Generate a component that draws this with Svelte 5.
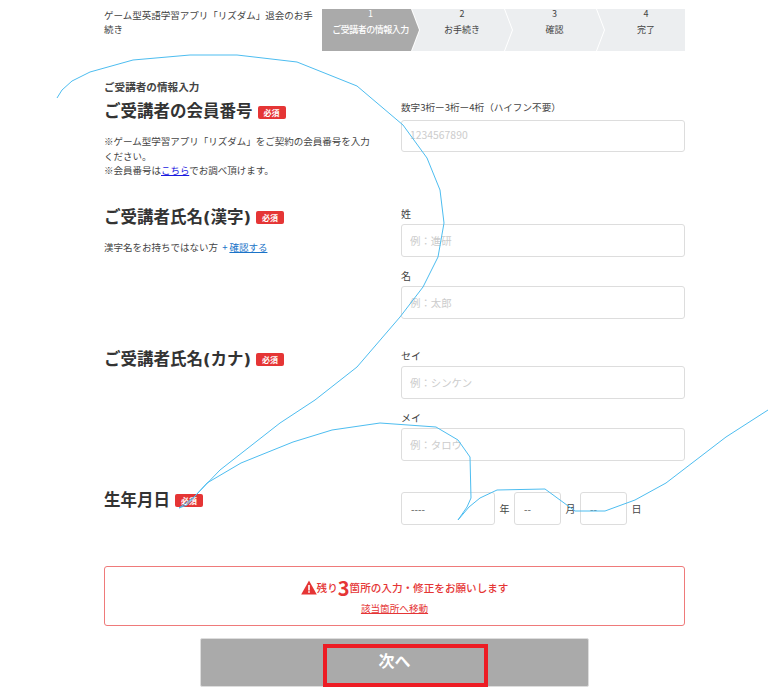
<script lang="ts">
  const steps = ['ご受講者の情報入力', 'お手続き', '確認', '完了']
  // hand-drawn annotation over the page
  const scribble = '57,98 62,90 72,81 90,72 133,60 190,55 237,55 297,62 357,86 403,125 427,158 440,190 444,223 438,257 423,287 400,317 357,367 315,400 280,423 220,470 194,497 179,508 187,505 207,483 241,463 293,442 332,430 380,423 436,427 458,440 470,457 471,498 467,507 458,520 469,507 480,498 497,490 545,489 575,511 605,511 635,500 666,483 726,437 768,410'
</script>

<div class="page">
  <header class="head">
    <p class="title">ゲーム型英語学習アプリ「リズダム」退会のお手続き</p>
    <ol class="steps">
      {#each steps as step, i}
        <li class="step" class:active={i === 0}>
          <span class="num">{i + 1}</span>
          <span class="label">{step}</span>
        </li>
      {/each}
    </ol>
  </header>

  <h2 class="section">ご受講者の情報入力</h2>

  <section class="row first">
    <div class="left">
      <h3>ご受講者の会員番号<span class="req">必須</span></h3>
      <p class="note">※ゲーム型学習アプリ「リズダム」をご契約の会員番号を入力ください。<br />※会員番号は<a class="here" href="#top">こちら</a>でお調べ頂けます。</p>
    </div>
    <div class="right">
      <div class="field">
        <span class="cap">数字3桁ー3桁ー4桁（ハイフン不要）</span>
        <input placeholder="1234567890" />
      </div>
    </div>
  </section>

  <section class="row kanji">
    <div class="left">
      <h3>ご受講者氏名(漢字)<span class="req">必須</span></h3>
      <p class="note">漢字名をお持ちではない方 <a class="more" href="#top"><span class="plus">+</span><u>確認する</u></a></p>
    </div>
    <div class="right">
      <div class="field">
        <span class="cap">姓</span>
        <input placeholder="例：進研" />
      </div>
      <div class="field">
        <span class="cap">名</span>
        <input placeholder="例：太郎" />
      </div>
    </div>
  </section>

  <section class="row kana">
    <div class="left">
      <h3>ご受講者氏名(カナ)<span class="req">必須</span></h3>
    </div>
    <div class="right">
      <div class="field">
        <span class="cap">セイ</span>
        <input placeholder="例：シンケン" />
      </div>
      <div class="field">
        <span class="cap">メイ</span>
        <input placeholder="例：タロウ" />
      </div>
    </div>
  </section>

  <section class="row birth">
    <div class="left">
      <h3>生年月日<span class="req">必須</span></h3>
    </div>
    <div class="date">
      <span class="select year">----</span><span class="unit">年</span>
      <span class="select">--</span><span class="unit">月</span>
      <span class="select">--</span><span class="unit">日</span>
    </div>
  </section>

  <div class="alert">
    <p class="msg">
      <svg width="16" height="15" viewBox="0 0 16 15"><path d="M8 .5 15.8 14.5H.2Z" fill="#e53535" /><rect x="7.2" y="5" width="1.6" height="5.5" fill="#fff" /><rect x="7.2" y="11.2" width="1.6" height="1.6" fill="#fff" /></svg>残り<b>3</b>箇所の入力・修正をお願いします
    </p>
    <a class="jump" href="#top">該当箇所へ移動</a>
  </div>

  <div class="actions">
    <button class="next">次へ<span class="mark"></span></button>
  </div>

  <svg class="scribble" width="768" height="695" viewBox="0 0 768 695">
    <polyline points={scribble} fill="none" stroke="#4dbdf0" stroke-width="1" />
  </svg>
</div>

<style>
  :global(body) { margin: 0; background: #fff; }
  .page {
    position: relative;
    width: 768px;
    height: 695px;
    overflow: hidden;
    padding: 9px 83px 0 104px;
    box-sizing: border-box;
    font-family: "Noto Sans CJK JP", "Noto Sans", sans-serif;
    color: #333;
  }
  .head { display: flex; justify-content: space-between; height: 42px; }
  .title { margin: -1px 0 0; width: 215px; font-size: 9.5px; line-height: 14px; color: #444; }
  .steps { display: flex; margin: 0; padding: 0; list-style: none; width: 363px; }
  .step {
    width: 97px;
    height: 42px;
    margin-right: -7px;
    flex: none;
    display: flex;
    flex-direction: column;
    align-items: center;
    background: #eceef0;
    color: #444;
    clip-path: polygon(0 0, calc(100% - 8px) 0, 100% 50%, calc(100% - 8px) 100%, 0 100%, 8px 50%);
  }
  .step:nth-child(2) { width: 100px; }
  .step:nth-child(3) { width: 99px; }
  .step:last-child {
    width: 88px;
    margin-right: 0;
    padding-left: 10px;
    box-sizing: border-box;
    clip-path: polygon(0 0, 100% 0, 100% 100%, 0 100%, 8px 50%);
  }
  .step.active {
    background: #aaa;
    color: #fff;
    clip-path: polygon(0 0, calc(100% - 8px) 0, 100% 50%, calc(100% - 8px) 100%, 0 100%);
  }
  .num { font-size: 9px; line-height: 10px; }
  .label { font-size: 9px; line-height: 14px; margin-top: 4px; white-space: nowrap; }
  .active .label { letter-spacing: -0.5px; font-weight: 500; }

  .section { margin: 28px 0 4px; font-size: 10.6px; line-height: 16px; font-weight: 700; color: #444; }

  .row { display: flex; justify-content: space-between; }
  .left { width: 270px; padding-top: 1px; }
  .right { width: 284px; padding-top: 1px; display: flex; flex-direction: column; gap: 11px; }
  .first .cap { margin-bottom: 5px; font-size: 9.6px; }
  .first input { height: 32px; padding-bottom: 3px; }
  .kanji { margin-top: 27px; }
  .kana { margin-top: 28px; }
  .birth { margin-top: 27px; }

  h3 {
    margin: 0;
    font-family: "DejaVu Sans", "Noto Sans CJK JP", sans-serif;
    font-size: 16.5px;
    line-height: 24px;
    font-weight: 700;
    color: #333;
    display: flex;
    align-items: center;
  }
  .req {
    margin-left: 5px;
    padding: 0 6px;
    height: 13px;
    border-radius: 2px;
    background: #e53535;
    color: #fff;
    font-family: "Noto Sans CJK JP", sans-serif;
    font-size: 8px;
    line-height: 13px;
    font-weight: 700;
  }
  .note { margin: 10px 0 0; font-size: 9.5px; line-height: 14.5px; color: #444; }
  .here { color: #1a1ae0; text-decoration: underline; }
  .more { color: #1a73c8; text-decoration: none; margin-left: 2px; }
  .plus { margin-right: 2px; }

  .field { display: flex; flex-direction: column; }
  .cap { font-size: 10px; line-height: 15px; color: #444; margin-bottom: 3px; }
  input {
    box-sizing: border-box;
    width: 100%;
    height: 33px;
    padding: 0 8px;
    border: 1px solid #ddd;
    border-radius: 3px;
    background: #fff;
    font: inherit;
    font-size: 10.4px;
    outline: none;
  }
  input::placeholder { color: #ccc; }

  .date { width: 284px; margin-top: 4px; display: flex; align-items: center; align-self: flex-start; font-size: 10px; color: #444; }
  .select {
    box-sizing: border-box;
    width: 47px;
    height: 33px;
    padding: 0 9px;
    border: 1px solid #ddd;
    border-radius: 3px;
    line-height: 31px;
    color: #555;
  }
  .select.year { width: 94px; }
  .unit { width: 19px; text-align: center; flex: none; }

  .alert {
    box-sizing: border-box;
    height: 60px;
    margin-top: 41px;
    border: 1px solid #ef7a7a;
    border-radius: 3px;
    display: flex;
    flex-direction: column;
    align-items: center;
    color: #e53535;
  }
  .msg { margin: 10px 0 0; padding-left: 20px; display: flex; align-items: center; font-size: 10.6px; line-height: 22px; font-weight: 500; }
  .msg b { font-size: 20px; font-weight: 700; line-height: 22px; }
  .jump { font-size: 9.6px; line-height: 14px; margin-top: 2px; color: #e53535; }

  .actions { display: flex; justify-content: center; margin-top: 12px; }
  .next {
    position: relative;
    width: 389px;
    height: 49px;
    border: 1px solid #ddd;
    border-radius: 2px;
    background: #aaa;
    color: #fff;
    font: inherit;
    font-size: 16px;
    font-weight: 700;
    padding: 0 0 4px;
  }
  .mark {
    position: absolute;
    left: 122px;
    top: 5px;
    width: 165px;
    height: 43px;
    box-sizing: border-box;
    border: 4px solid #ed1c24;
  }
  .scribble { position: absolute; left: 0; top: 0; pointer-events: none; }
</style>
